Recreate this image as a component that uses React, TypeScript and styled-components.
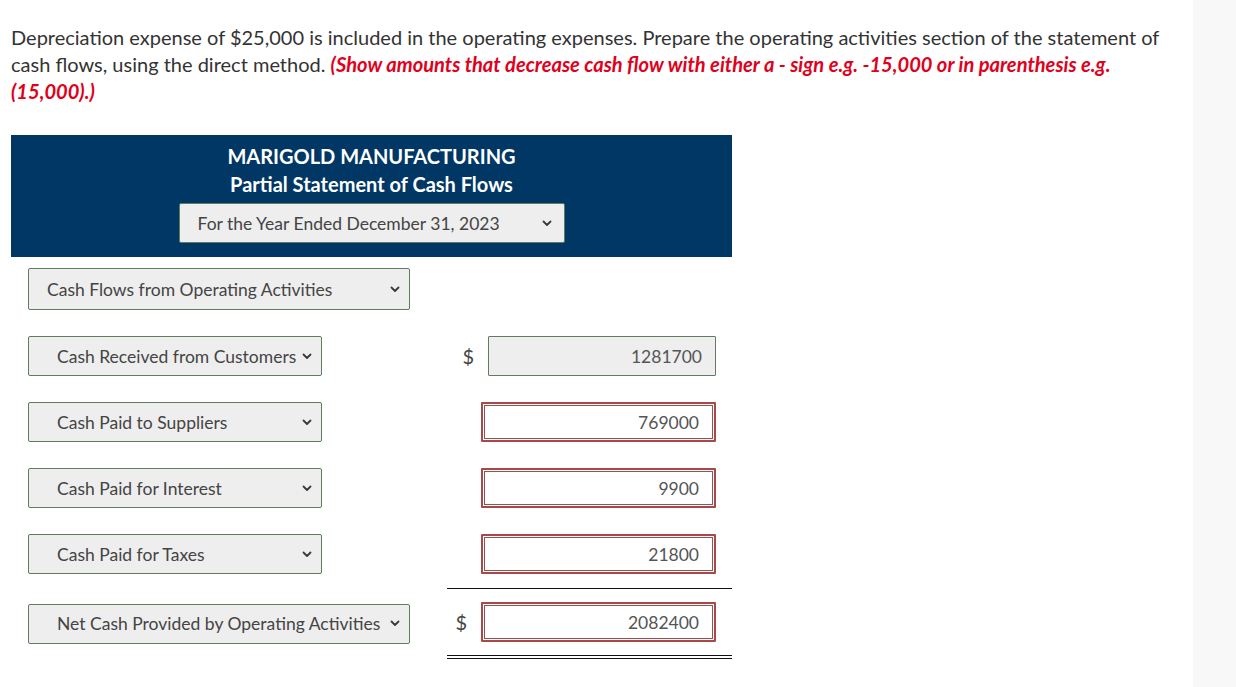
import styled, { createGlobalStyle } from "styled-components"

const GlobalStyle = createGlobalStyle`
    html, body {
        margin: 0;
        padding: 0;
        background: #ffffff;
    }
    body {
        font-family: Lato, "Open Sans", sans-serif;
        color: #333333;
    }
`

type Line = {
    label: string
    amount: string
    dollar?: boolean
    invalid?: boolean
    rule?: "total"
}

const lines: Array<Line> = [
    { label: "Cash Received from Customers", amount: "1281700", dollar: true },
    { label: "Cash Paid to Suppliers", amount: "769000", invalid: true },
    { label: "Cash Paid for Interest", amount: "9900", invalid: true },
    { label: "Cash Paid for Taxes", amount: "21800", invalid: true },
    { label: "Net Cash Provided by Operating Activities", amount: "2082400", dollar: true, invalid: true, rule: "total" },
]

const Chevron = () => (
    <svg width="10" height="7" viewBox="0 0 10 7" fill="none">
        <path d="M1.5 1.5 L5 5 L8.5 1.5" stroke="#3a3a3a" strokeWidth="1.8" strokeLinecap="round" strokeLinejoin="round" />
    </svg>
)

const App = () => {
    return (
        <>
            <GlobalStyle />
            <Page>
                <Main>
                    <Question>
                        Depreciation expense of $25,000 is included in the operating expenses. Prepare the operating activities
                        section of the statement of cash flows, using the direct method.{" "}
                        <Hint>(Show amounts that decrease cash flow with either a - sign e.g. -15,000 or in parenthesis e.g. (15,000).)</Hint>
                    </Question>

                    <Statement>
                        <Header>
                            <Title>MARIGOLD MANUFACTURING</Title>
                            <Title>Partial Statement of Cash Flows</Title>
                            <Dropdown $width={386} $padLeft={18} $padRight={12}>
                                <span>For the Year Ended December 31, 2023</span>
                                <Chevron />
                            </Dropdown>
                        </Header>

                        <Rows>
                            <Row $top={11}>
                                <LabelCell>
                                    <Dropdown $width={382} $height={42} $padLeft={18} $padRight={9}>
                                        <span>Cash Flows from Operating Activities</span>
                                        <Chevron />
                                    </Dropdown>
                                </LabelCell>
                            </Row>

                            {lines.map((line, key) => (
                                <Row key={key} $top={line.rule ? 14 : 26}>
                                    <LabelCell>
                                        <Dropdown $width={line.rule ? 382 : 294} $padLeft={28} $padRight={9}>
                                            <span>{line.label}</span>
                                            <Chevron />
                                        </Dropdown>
                                    </LabelCell>
                                    <AmountCell $rule={line.rule}>
                                        {line.dollar && <Dollar>$</Dollar>}
                                        <Amount
                                            readOnly
                                            value={line.amount}
                                            $invalid={line.invalid}
                                        />
                                    </AmountCell>
                                </Row>
                            ))}
                        </Rows>
                    </Statement>
                </Main>
                <Aside />
            </Page>
        </>
    )
}

export default App

const Page = styled.div`
    display: flex;
    width: 100%;
    min-height: 687px;
`

const Main = styled.main`
    width: 1193px;
    flex-shrink: 0;
    padding: 24px 0 40px 11px;
    box-sizing: border-box;
`

const Aside = styled.aside`
    flex: 1;
    background: #f8f8f8;
`

const Question = styled.p`
    margin: 0;
    font-size: 20px;
    line-height: 27px;
    color: #333333;
    max-width: 1170px;
`

const Hint = styled.span`
    color: #e0001b;
    font-weight: 700;
    font-style: italic;
    font-size: 20.1px;
`

const Statement = styled.section`
    width: 721px;
    margin-top: 30px;
`

const Header = styled.div`
    background: #003764;
    color: #ffffff;
    display: flex;
    flex-direction: column;
    align-items: center;
    padding: 7px 0 14px;
`

const Title = styled.div`
    font-size: 20px;
    font-weight: 700;
    line-height: 28px;

    & + & {
        margin-bottom: 5px;
    }
`

const Dropdown = styled.div<{ $width: number; $height?: number; $padLeft: number; $padRight: number }>`
    width: ${(p) => p.$width}px;
    height: ${(p) => p.$height ?? 40}px;
    box-sizing: border-box;
    display: flex;
    align-items: center;
    justify-content: space-between;
    gap: 6px;
    padding: 0 ${(p) => p.$padRight}px 0 ${(p) => p.$padLeft}px;
    background: #eeeeee;
    border: 1px solid #5e7d5e;
    border-radius: 2px;
    color: #444444;
    font-size: 17.5px;
    white-space: nowrap;

    svg {
        flex-shrink: 0;
    }
`

const Rows = styled.div`
    display: flex;
    flex-direction: column;
`

const Row = styled.div<{ $top: number }>`
    display: grid;
    grid-template-columns: 436px 285px;
    align-items: center;
    margin-top: ${(p) => p.$top}px;
`

const LabelCell = styled.div`
    padding-left: 17px;
`

const AmountCell = styled.div<{ $rule?: "total" }>`
    display: flex;
    align-items: center;
    justify-content: flex-end;
    gap: 14px;
    padding-right: 16px;
    ${(p) =>
        p.$rule === "total" &&
        `
        border-top: 1px solid #111;
        border-bottom: 4px double #111;
        padding-top: 13px;
        padding-bottom: 13px;
    `}
`

const Dollar = styled.span`
    font-size: 20px;
    color: #444444;
`

const Amount = styled.input<{ $invalid?: boolean }>`
    height: 40px;
    box-sizing: border-box;
    text-align: right;
    font-family: Lato, "Open Sans", sans-serif;
    font-size: 17.5px;
    color: #555555;
    outline: none;
    border-radius: 1px;
    ${(p) =>
        p.$invalid
            ? `
        width: 235px;
        background: #ffffff;
        border: 2px solid #a54a4a;
        box-shadow: inset 0 0 0 1px #ffffff, inset 0 0 0 2px #a54a4a;
        padding: 0 15px 0 8px;
    `
            : `
        width: 228px;
        background: #eeeeee;
        border: 1px solid #5e7d5e;
        padding: 0 13px 0 8px;
    `}
`
